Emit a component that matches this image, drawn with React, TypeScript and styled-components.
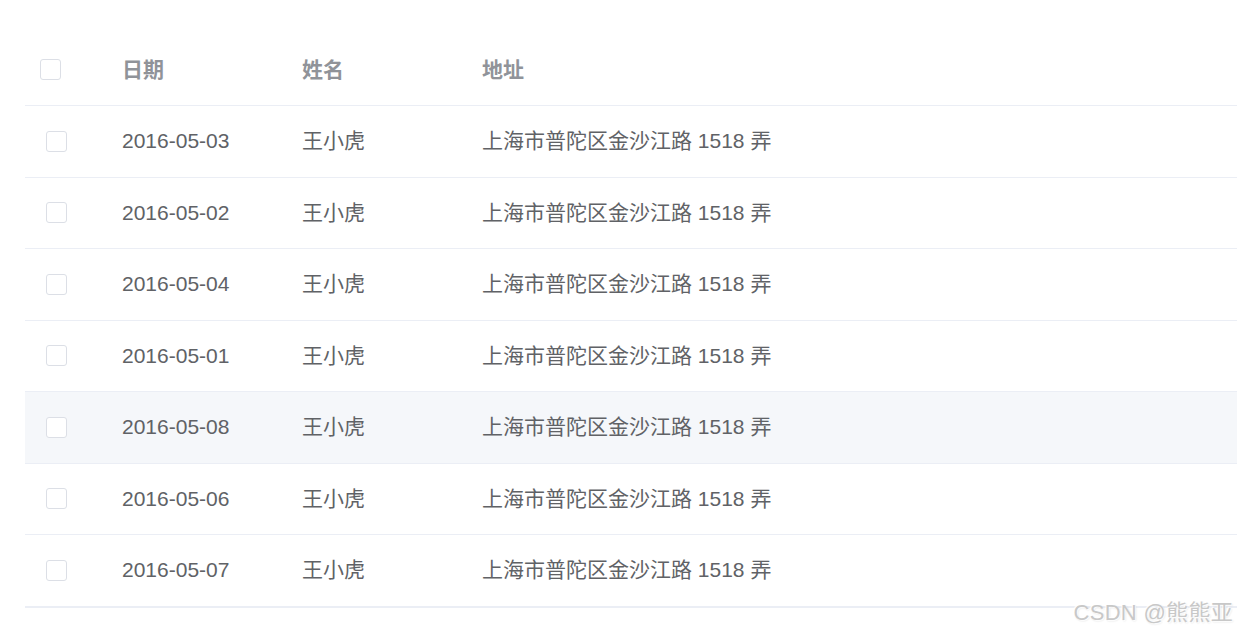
import { FC } from "react";
import styled, { createGlobalStyle } from "styled-components";

const GlobalStyle = createGlobalStyle`
  html, body {
    margin: 0;
    padding: 0;
    background: #fff;
  }
  body {
    font-family: "Liberation Sans", "Noto Sans CJK SC", sans-serif;
  }
`;

type Row = {
  date: string;
  name: string;
  address: string;
  hovered?: boolean;
};

const rows: Row[] = [
  { date: "2016-05-03", name: "王小虎", address: "上海市普陀区金沙江路 1518 弄" },
  { date: "2016-05-02", name: "王小虎", address: "上海市普陀区金沙江路 1518 弄" },
  { date: "2016-05-04", name: "王小虎", address: "上海市普陀区金沙江路 1518 弄" },
  { date: "2016-05-01", name: "王小虎", address: "上海市普陀区金沙江路 1518 弄" },
  { date: "2016-05-08", name: "王小虎", address: "上海市普陀区金沙江路 1518 弄", hovered: true },
  { date: "2016-05-06", name: "王小虎", address: "上海市普陀区金沙江路 1518 弄" },
  { date: "2016-05-07", name: "王小虎", address: "上海市普陀区金沙江路 1518 弄" },
];

const App: FC = () => {
  return (
    <Page>
      <GlobalStyle />
      <Table>
        <HeaderRow>
          <SelectCell $offset={15}>
            <Checkbox />
          </SelectCell>
          <HeadCell>日期</HeadCell>
          <HeadCell>姓名</HeadCell>
          <HeadCell>地址</HeadCell>
        </HeaderRow>
        {rows.map((row) => (
          <BodyRow key={row.date} $hovered={row.hovered}>
            <SelectCell $offset={21}>
              <Checkbox />
            </SelectCell>
            <Cell>{row.date}</Cell>
            <Cell>{row.name}</Cell>
            <Cell>{row.address}</Cell>
          </BodyRow>
        ))}
      </Table>
      <Watermark>CSDN @熊熊亚</Watermark>
    </Page>
  );
};

export default App;

const Page = styled.div`
  position: relative;
  width: 1237px;
  height: 632px;
  padding: 34px 0 0 25px;
  box-sizing: border-box;
  overflow: hidden;
`;

const Table = styled.div`
  display: flex;
  flex-direction: column;
  width: 1212px;
  border-bottom: 2px solid #ebeef5;
`;

const gridCols = "97px 180px 180px 1fr";

const HeaderRow = styled.div`
  display: grid;
  grid-template-columns: ${gridCols};
  align-items: center;
  height: 71px;
  border-bottom: 1px solid #ebeef5;
`;

const BodyRow = styled.div<{ $hovered?: boolean }>`
  display: grid;
  grid-template-columns: ${gridCols};
  align-items: center;
  height: 71.5px;
  box-sizing: border-box;
  border-bottom: 1px solid #ebeef5;
  background: ${({ $hovered }) => ($hovered ? "#f5f7fa" : "#fff")};

  &:last-child {
    height: 70.5px;
    border-bottom: none;
  }
`;

const SelectCell = styled.div<{ $offset: number }>`
  display: flex;
  align-items: center;
  padding-left: ${({ $offset }) => $offset}px;
`;

const Checkbox = styled.span`
  display: inline-block;
  width: 19px;
  height: 19px;
  border: 1px solid #dcdfe6;
  border-radius: 3px;
  background: #fff;
`;

const HeadCell = styled.div`
  font-size: 21px;
  font-weight: 700;
  color: #909399;
  line-height: 32px;
`;

const Cell = styled.div`
  font-size: 21px;
  color: #606266;
  line-height: 32px;
  white-space: nowrap;
`;

const Watermark = styled.div`
  position: absolute;
  right: 4px;
  bottom: 6px;
  font-size: 22px;
  color: #c8c8c8;
  text-shadow: 1px 1px 1px #fff, -1px -1px 1px #fff, 1px 1px 2px rgba(0, 0, 0, 0.15);
  letter-spacing: 0.3px;
`;
